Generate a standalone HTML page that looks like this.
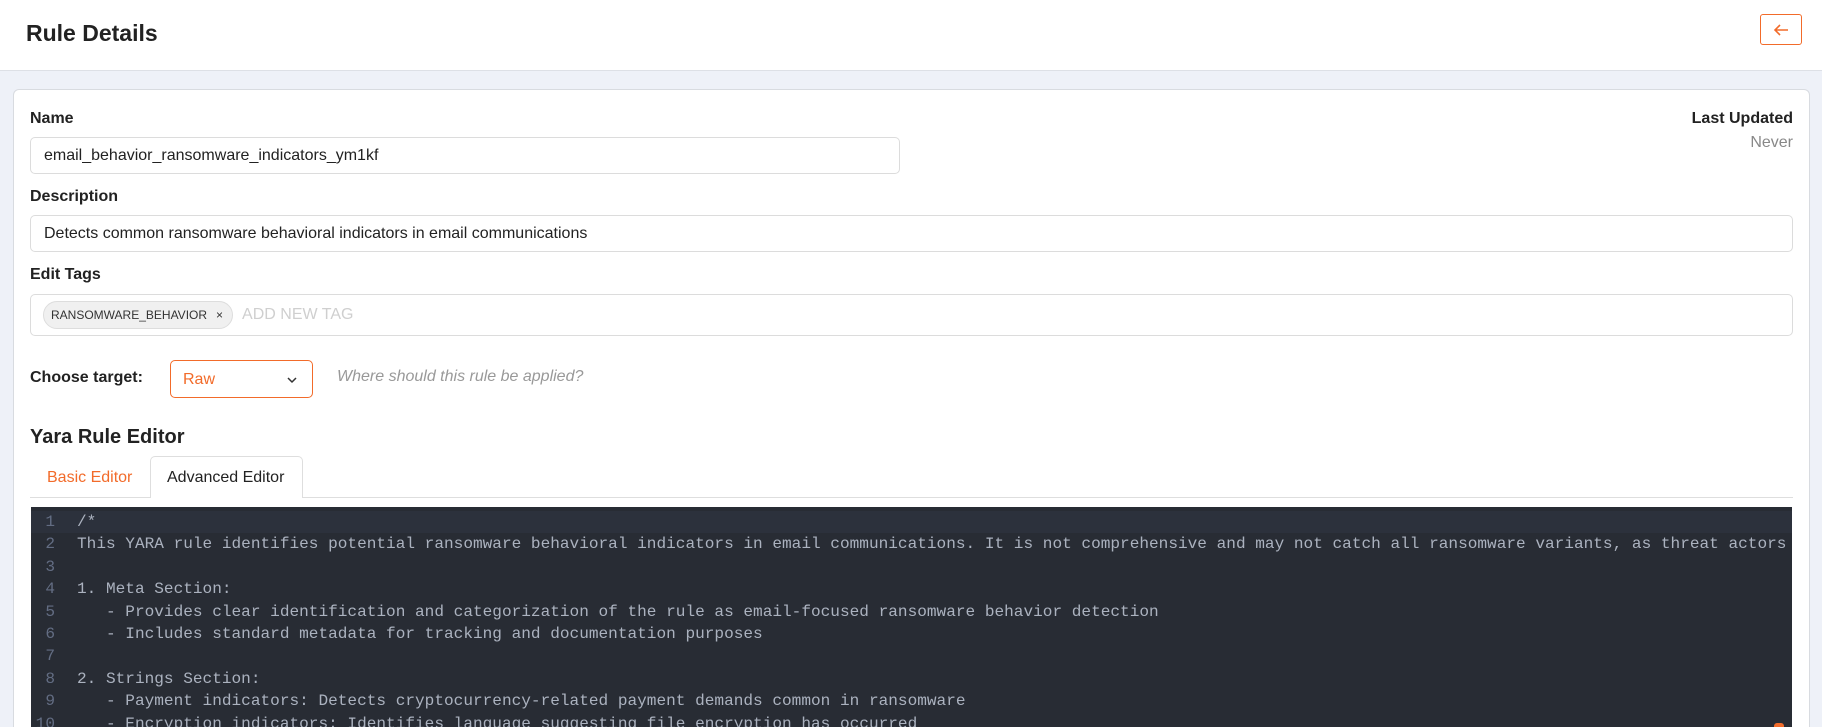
<!DOCTYPE html>
<html style="width:1822px;height:727px;overflow:hidden"><head><meta charset="utf-8"><style>
*{box-sizing:border-box;margin:0;padding:0}
body{width:1822px;height:727px;overflow:hidden;background:#eef1f8;font-family:"Liberation Sans",sans-serif;color:#222;position:relative}
.hdr{position:absolute;left:0;top:0;width:1822px;height:71px;background:#fff;border-bottom:1px solid #dde0e6}
.title{position:absolute;left:26px;top:20px;font-size:23px;font-weight:bold;color:#222}
.back{position:absolute;left:1760px;top:14px;width:42px;height:31px;border:1px solid #f26b2a;border-radius:3px}
.card{position:absolute;left:13px;top:89px;width:1797px;height:638px;background:#fff;border:1px solid #d8dbe0;border-bottom:none;border-radius:6px 6px 0 0}
.a{position:absolute}
.lbl{font-size:16px;font-weight:bold;color:#222}
.inp{border:1px solid #dcdcdc;border-radius:5px;background:#fff;font-size:16px;color:#222;padding-left:13px;display:flex;align-items:center}
.code{position:absolute;left:31px;top:507px;width:1761px;height:220px;background:#282c34;overflow:hidden;font-family:"Liberation Mono",monospace;font-size:16.1px;color:#abb2bf}
.ln{position:absolute;left:0;width:1761px;height:22.4px;line-height:22.4px;white-space:pre}
.ln .n{position:absolute;left:0;width:24px;text-align:right;color:#636d83}
.ln .t{position:absolute;left:46px}
</style></head><body>
<div class="hdr"><div class="title">Rule Details</div>
<div class="back"><svg width="40" height="29" viewBox="0 0 40 29"><path d="M27 15H14M19 10l-5 5 5 5" fill="none" stroke="#f26b2a" stroke-width="1.6"/></svg></div></div>
<div class="card"></div>
<div class="a lbl" style="left:30px;top:110px">Name</div>
<div class="a lbl" style="right:29px;top:110px">Last Updated</div>
<div class="a" style="right:29px;top:134px;font-size:16px;color:#888">Never</div>
<div class="a inp" style="left:30px;top:137px;width:870px;height:37px">email_behavior_ransomware_indicators_ym1kf</div>
<div class="a lbl" style="left:30px;top:188px">Description</div>
<div class="a inp" style="left:30px;top:215px;width:1763px;height:37px">Detects common ransomware behavioral indicators in email communications</div>
<div class="a lbl" style="left:30px;top:266px">Edit Tags</div>
<div class="a inp" style="left:30px;top:294px;width:1763px;height:42px;padding-left:12px">
<span style="display:inline-flex;align-items:center;height:28px;padding:0 9px 0 7px;background:#f0f0f0;border:1px solid #ddd;border-radius:14px;font-size:12px;color:#333">RANSOMWARE_BEHAVIOR<span style="margin-left:9px">×</span></span>
<span style="margin-left:9px;font-size:16px;color:#cfcfcf">ADD NEW TAG</span></div>
<div class="a lbl" style="left:30px;top:369px">Choose target:</div>
<div class="a" style="left:170px;top:360px;width:143px;height:38px;border:1px solid #f26b2a;border-radius:5px">
<span style="position:absolute;left:12px;top:10px;font-size:16px;color:#f26b2a">Raw</span>
<svg style="position:absolute;left:115px;top:14px" width="12" height="10" viewBox="0 0 12 10"><path d="M2 3l4 4 4-4" fill="none" stroke="#333" stroke-width="1.5"/></svg></div>
<div class="a" style="left:337px;top:368px;font-size:16px;font-style:italic;color:#999">Where should this rule be applied?</div>
<div class="a" style="left:30px;top:426px;font-size:20px;font-weight:bold;color:#222">Yara Rule Editor</div>
<div class="a" style="left:30px;top:497px;width:1763px;height:1px;background:#dedede"></div>
<div class="a" style="left:47px;top:469px;font-size:16px;color:#f26b2a">Basic Editor</div>
<div class="a" style="left:150px;top:456px;width:153px;height:42px;background:#fff;border:1px solid #dedede;border-bottom:none;border-radius:5px 5px 0 0"></div>
<div class="a" style="left:167px;top:469px;font-size:16px;color:#222">Advanced Editor</div>
<div class="code">
<div class="ln" style="top:4px;background:#2c313c"><span class="n">1</span><span class="t">/*</span></div>
<div class="ln" style="top:26.4px"><span class="n">2</span><span class="t">This YARA rule identifies potential ransomware behavioral indicators in email communications. It is not comprehensive and may not catch all ransomware variants, as threat actors</span></div>
<div class="ln" style="top:48.8px"><span class="n">3</span></div>
<div class="ln" style="top:71.2px"><span class="n">4</span><span class="t">1. Meta Section:</span></div>
<div class="ln" style="top:93.6px"><span class="n">5</span><span class="t">   - Provides clear identification and categorization of the rule as email-focused ransomware behavior detection</span></div>
<div class="ln" style="top:116px"><span class="n">6</span><span class="t">   - Includes standard metadata for tracking and documentation purposes</span></div>
<div class="ln" style="top:138.4px"><span class="n">7</span></div>
<div class="ln" style="top:160.8px"><span class="n">8</span><span class="t">2. Strings Section:</span></div>
<div class="ln" style="top:183.2px"><span class="n">9</span><span class="t">   - Payment indicators: Detects cryptocurrency-related payment demands common in ransomware</span></div>
<div class="ln" style="top:205.6px"><span class="n">10</span><span class="t">   - Encryption indicators: Identifies language suggesting file encryption has occurred</span></div>
</div>
<div class="a" style="left:1774px;top:723px;width:10px;height:4px;background:#f26b2a;border-radius:3px 3px 0 0"></div>
</body></html>
